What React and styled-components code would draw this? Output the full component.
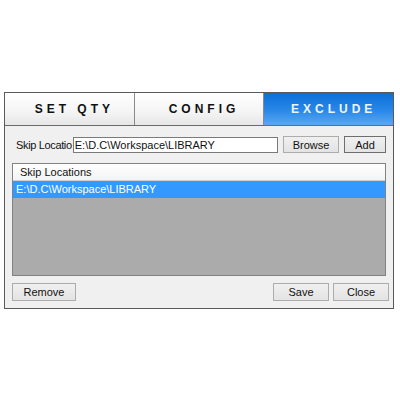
import React from "react";
import styled, { createGlobalStyle } from "styled-components";

const Global = createGlobalStyle`
  body {
    margin: 0;
    background: #fff;
    font-family: "Liberation Sans", Arial, sans-serif;
  }
`;

const Dialog = styled.div`
  width: 388px;
  margin: 92px 0 0 4px;
  border: 1px solid #5a5a5a;
  background: #f0f0f0;
`;

const Tabs = styled.div`
  display: flex;
  height: 32px;
  border-bottom: 1px solid #6b6b6b;
`;

const Tab = styled.div`
  flex: 1;
  display: flex;
  align-items: center;
  justify-content: center;
  padding-left: 10px;
  font-size: 12px;
  font-weight: bold;
  letter-spacing: 4px;
  color: ${(p) => (p.active ? "#eef5ff" : "#111")};
  background: ${(p) =>
    p.active
      ? "linear-gradient(#0a6fd8, #2a88e8 55%, #5aa8f2)"
      : "linear-gradient(#ffffff, #f4f4f4 60%, #e6e6e6)"};
  & + & {
    border-left: 1px solid #8a8a8a;
  }
`;

const Content = styled.div`
  display: flex;
  flex-direction: column;
  gap: 10px;
  padding: 10px 7px 7px;
  font-size: 11px;
`;

const Row = styled.div`
  display: flex;
  align-items: center;
  height: 17px;
`;

const Label = styled.div`
  margin: 0 1px 0 4px;
  letter-spacing: -0.35px;
  white-space: nowrap;
  color: #111;
`;

const Input = styled.div`
  flex: 1;
  height: 14px;
  line-height: 14px;
  padding-left: 1px;
  border: 1px solid #7a7a7a;
  background: #fff;
  color: #111;
  white-space: nowrap;
  overflow: hidden;
`;

const Button = styled.div`
  display: flex;
  align-items: center;
  justify-content: center;
  box-sizing: border-box;
  width: ${(p) => p.w}px;
  height: ${(p) => p.h || 17}px;
  margin-left: ${(p) => p.ml || 0}px;
  border: 1px solid ${(p) => (p.dark ? "#6e6e6e" : "#acacac")};
  background: linear-gradient(#f0f0f0, #e3e3e3);
  color: #111;
`;

const List = styled.div`
  display: flex;
  flex-direction: column;
  height: 111px;
  border: 1px solid #828282;
  background: #ababab;
`;

const Header = styled.div`
  height: 16px;
  line-height: 16px;
  padding-left: 7px;
  border-bottom: 1px solid #d0d0d0;
  background: linear-gradient(#ffffff, #f3f3f3);
  color: #111;
`;

const Item = styled.div`
  height: 17px;
  line-height: 17px;
  padding-left: 3px;
  background: #3399ff;
  color: #fff;
`;

const Footer = styled.div`
  display: flex;
  align-items: center;
  margin-top: -3px;
  margin-right: -3px;
`;

const Spacer = styled.div`
  flex: 1;
`;

export default function App() {
  return (
    <>
      <Global />
      <Dialog>
        <Tabs>
          <Tab>SET QTY</Tab>
          <Tab>CONFIG</Tab>
          <Tab active>EXCLUDE</Tab>
        </Tabs>
        <Content>
          <Row>
            <Label>Skip Locatio</Label>
            <Input>E:\D.C\Workspace\LIBRARY</Input>
            <Button w={56} ml={5}>Browse</Button>
            <Button w={42} ml={5} dark>Add</Button>
          </Row>
          <List>
            <Header>Skip Locations</Header>
            <Item>E:\D.C\Workspace\LIBRARY</Item>
          </List>
          <Footer>
            <Button w={64} h={18}>Remove</Button>
            <Spacer />
            <Button w={56} h={18}>Save</Button>
            <Button w={56} h={18} ml={4}>Close</Button>
          </Footer>
        </Content>
      </Dialog>
    </>
  );
}
